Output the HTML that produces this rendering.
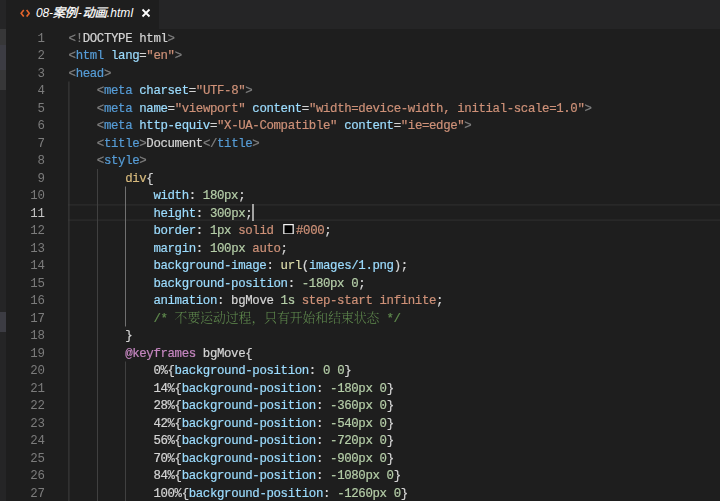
<!DOCTYPE html>
<html lang="zh">
<head>
<meta charset="UTF-8">
<title>08-案例-动画.html</title>
<style>
html,body{margin:0;padding:0;}
body{width:720px;height:501px;overflow:hidden;background:#1e1e1e;position:relative;font-family:"Liberation Mono","Noto Sans CJK SC",monospace;}
#all{position:absolute;left:0;top:0;width:720px;height:501px;filter:blur(0.35px);}
#side{position:absolute;left:0;top:0;width:6px;height:501px;background:#252526;}
#side i{position:absolute;left:0;width:6px;display:block;}
#tabs{position:absolute;left:6px;top:0;width:714px;height:28.7px;background:#252526;}
#tab{position:absolute;left:0;top:0;width:153px;height:28.7px;background:#1e1e1e;}
#tab .ico{position:absolute;left:13.6px;top:8.5px;width:10.4px;height:8.6px;}
#tab .name{position:absolute;left:30px;top:0;height:28px;line-height:27px;font-family:"Liberation Sans","Noto Sans CJK SC",sans-serif;font-style:italic;font-size:12px;color:#ffffff;white-space:nowrap;letter-spacing:-0.2px;}
#tab .name b{font-weight:normal;font-size:12.4px;letter-spacing:-0.3px;-webkit-text-stroke:0.3px}#tab .name em{letter-spacing:0.1px}#tab .name u{text-decoration:none;margin:0 1px 0 0.8px}
#tab .close{position:absolute;left:135px;top:8px;width:10px;height:10px;}
#ed{position:absolute;left:0;top:30.6px;width:720px;height:472px;}
.row{position:relative;height:17.5px;line-height:17.5px;white-space:pre;font-size:12.4px;letter-spacing:-0.37px;color:#d4d4d4;}
.ln{position:absolute;left:0;width:44.5px;text-align:right;color:#7c7c7c;}
.ln.act{color:#c6c6c6;}
.code{position:absolute;left:68.6px;top:0;-webkit-text-stroke:0.2px;}
.g{color:#808080}.t{color:#569cd6}.a{color:#9cdcfe}.s{color:#ce9178}.w{color:#d4d4d4}
.y{color:#d7ba7d}.n{color:#b5cea8}.f{color:#dcdcaa}.c{color:#608b4e}.k{color:#c586c0}
.cj{color:#608b4e;font-family:"Noto Serif CJK SC","Noto Sans CJK SC",serif;font-size:12.8px;line-height:0;letter-spacing:0;font-weight:300;-webkit-text-stroke:0;}
.cur{display:inline-block;width:2px;height:17.2px;background:#a2a2a1;vertical-align:top;margin:-1.7px -2px 0 0;}
.sw{display:inline-block;width:11px;height:10.6px;vertical-align:top;margin:0.5px 2.4px 0 2px;}
#ov{position:absolute;left:0;top:0;}
</style>
</head>
<body>
<div id="all">
<div id="side"><i style="top:29px;height:16px;background:#373738"></i><i style="top:45px;height:25px;background:#3c3c43"></i><i style="top:70px;height:19.5px;background:#373738"></i><i style="top:312.4px;height:20px;background:#3c3c43"></i></div>
<div id="tabs"><div id="tab">
<svg class="ico" viewBox="0 0 11 9"><path d="M4 1 L1.2 4.5 L4 8 M7 1 L9.8 4.5 L7 8" fill="none" stroke="#e4642b" stroke-width="1.7"/></svg>
<span class="name">08-<b>案例</b><u>-</u><b>动画</b><em>.html</em></span>
<svg class="close" viewBox="0 0 10 10"><path d="M1.5 1.5 L8.5 8.5 M8.5 1.5 L1.5 8.5" fill="none" stroke="#ffffff" stroke-width="1.8"/></svg>
</div></div>
<svg id="ov" width="720" height="501" viewBox="0 0 720 501">
<rect x="68" y="204" width="652" height="1.8" fill="#282828"/>
<rect x="68" y="219.2" width="652" height="1.8" fill="#282828"/>
<rect x="68.4" y="81.5" width="1" height="420" fill="#404040"/>
<rect x="97" y="169" width="1" height="333" fill="#404040"/>
<rect x="125" y="186.5" width="1" height="140" fill="#707070"/>
<rect x="125" y="361.5" width="1" height="140" fill="#404040"/>
</svg>
<div id="ed">
<div class="row"><span class="ln">1</span><span class="code"><span class="g">&lt;!</span><span class="w">DOCTYPE</span><span class="w"> </span><span class="w">html</span><span class="g">&gt;</span></span></div>
<div class="row"><span class="ln">2</span><span class="code"><span class="g">&lt;</span><span class="t">html</span><span class="w"> </span><span class="a">lang</span><span class="w">=</span><span class="s">"en"</span><span class="g">&gt;</span></span></div>
<div class="row"><span class="ln">3</span><span class="code"><span class="g">&lt;</span><span class="t">head</span><span class="g">&gt;</span></span></div>
<div class="row"><span class="ln">4</span><span class="code">    <span class="g">&lt;</span><span class="t">meta</span><span class="w"> </span><span class="a">charset</span><span class="w">=</span><span class="s">"UTF-8"</span><span class="g">&gt;</span></span></div>
<div class="row"><span class="ln">5</span><span class="code">    <span class="g">&lt;</span><span class="t">meta</span><span class="w"> </span><span class="a">name</span><span class="w">=</span><span class="s">"viewport"</span><span class="w"> </span><span class="a">content</span><span class="w">=</span><span class="s">"width=device-width, initial-scale=1.0"</span><span class="g">&gt;</span></span></div>
<div class="row"><span class="ln">6</span><span class="code">    <span class="g">&lt;</span><span class="t">meta</span><span class="w"> </span><span class="a">http-equiv</span><span class="w">=</span><span class="s">"X-UA-Compatible"</span><span class="w"> </span><span class="a">content</span><span class="w">=</span><span class="s">"ie=edge"</span><span class="g">&gt;</span></span></div>
<div class="row"><span class="ln">7</span><span class="code">    <span class="g">&lt;</span><span class="t">title</span><span class="g">&gt;</span><span class="w">Document</span><span class="g">&lt;/</span><span class="t">title</span><span class="g">&gt;</span></span></div>
<div class="row"><span class="ln">8</span><span class="code">    <span class="g">&lt;</span><span class="t">style</span><span class="g">&gt;</span></span></div>
<div class="row"><span class="ln">9</span><span class="code">        <span class="y">div</span><span class="w">{</span></span></div>
<div class="row"><span class="ln">10</span><span class="code">            <span class="a">width</span><span class="w">: </span><span class="n">180px</span><span class="w">;</span></span></div>
<div class="row"><span class="ln act">11</span><span class="code">            <span class="a">height</span><span class="w">: </span><span class="n">300px</span><span class="w">;</span><i class="cur"></i></span></div>
<div class="row"><span class="ln">12</span><span class="code">            <span class="a">border</span><span class="w">: </span><span class="n">1px</span><span class="w"> </span><span class="s">solid</span><span class="w"> </span><svg class="sw" viewBox="0 0 11 11"><rect x="0.65" y="0.65" width="9.7" height="9.7" fill="#000000" stroke="#f4f4f4" stroke-width="1.3"/></svg><span class="s">#000</span><span class="w">;</span></span></div>
<div class="row"><span class="ln">13</span><span class="code">            <span class="a">margin</span><span class="w">: </span><span class="n">100px</span><span class="w"> </span><span class="s">auto</span><span class="w">;</span></span></div>
<div class="row"><span class="ln">14</span><span class="code">            <span class="a">background-image</span><span class="w">: </span><span class="f">url</span><span class="w">(</span><span class="a">images/1.png</span><span class="w">);</span></span></div>
<div class="row"><span class="ln">15</span><span class="code">            <span class="a">background-position</span><span class="w">: </span><span class="n">-180px</span><span class="w"> </span><span class="n">0</span><span class="w">;</span></span></div>
<div class="row"><span class="ln">16</span><span class="code">            <span class="a">animation</span><span class="w">: bgMove </span><span class="n">1s</span><span class="w"> </span><span class="s">step-start</span><span class="w"> </span><span class="s">infinite</span><span class="w">;</span></span></div>
<div class="row"><span class="ln">17</span><span class="code">            <span class="c">/* </span><span class="cj">不要运动过程，只有开始和结束状态</span><span class="c"> */</span></span></div>
<div class="row"><span class="ln">18</span><span class="code">        <span class="w">}</span></span></div>
<div class="row"><span class="ln">19</span><span class="code">        <span class="k">@keyframes</span><span class="w"> bgMove{</span></span></div>
<div class="row"><span class="ln">20</span><span class="code">            <span class="w">0%</span><span class="w">{</span><span class="a">background-position</span><span class="w">: </span><span class="n">0</span><span class="w"> </span><span class="n">0</span><span class="w">}</span></span></div>
<div class="row"><span class="ln">21</span><span class="code">            <span class="w">14%</span><span class="w">{</span><span class="a">background-position</span><span class="w">: </span><span class="n">-180px</span><span class="w"> </span><span class="n">0</span><span class="w">}</span></span></div>
<div class="row"><span class="ln">22</span><span class="code">            <span class="w">28%</span><span class="w">{</span><span class="a">background-position</span><span class="w">: </span><span class="n">-360px</span><span class="w"> </span><span class="n">0</span><span class="w">}</span></span></div>
<div class="row"><span class="ln">23</span><span class="code">            <span class="w">42%</span><span class="w">{</span><span class="a">background-position</span><span class="w">: </span><span class="n">-540px</span><span class="w"> </span><span class="n">0</span><span class="w">}</span></span></div>
<div class="row"><span class="ln">24</span><span class="code">            <span class="w">56%</span><span class="w">{</span><span class="a">background-position</span><span class="w">: </span><span class="n">-720px</span><span class="w"> </span><span class="n">0</span><span class="w">}</span></span></div>
<div class="row"><span class="ln">25</span><span class="code">            <span class="w">70%</span><span class="w">{</span><span class="a">background-position</span><span class="w">: </span><span class="n">-900px</span><span class="w"> </span><span class="n">0</span><span class="w">}</span></span></div>
<div class="row"><span class="ln">26</span><span class="code">            <span class="w">84%</span><span class="w">{</span><span class="a">background-position</span><span class="w">: </span><span class="n">-1080px</span><span class="w"> </span><span class="n">0</span><span class="w">}</span></span></div>
<div class="row"><span class="ln">27</span><span class="code">            <span class="w">100%</span><span class="w">{</span><span class="a">background-position</span><span class="w">: </span><span class="n">-1260px</span><span class="w"> </span><span class="n">0</span><span class="w">}</span></span></div>
</div>
</div>
</body>
</html>
